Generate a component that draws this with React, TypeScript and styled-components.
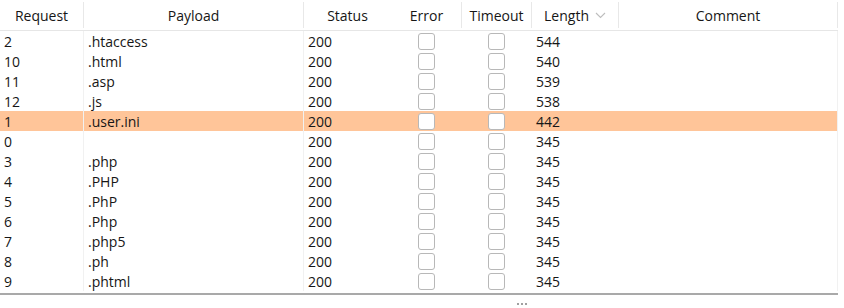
import React from "react";
import styled, { createGlobalStyle } from "styled-components";

const GlobalStyle = createGlobalStyle`
	html, body {
		margin: 0;
		padding: 0;
		background: #ffffff;
	}
	body {
		font-family: "Open Sans", "Noto Sans", "Liberation Sans", sans-serif;
		font-size: 14px;
		color: #161616;
	}
`;

interface Column {
	key: string;
	title: string;
	width: number;
	sorted?: boolean;
	divider?: boolean;
	noHeaderLine?: boolean;
}

interface Result {
	request: number;
	payload: string;
	status: number;
	length: number;
	selected?: boolean;
}

const columns: Column[] = [
	{ key: "request", title: "Request", width: 84, divider: true },
	{ key: "payload", title: "Payload", width: 220, divider: true },
	{ key: "status", title: "Status", width: 88, noHeaderLine: true },
	{ key: "error", title: "Error", width: 70 },
	{ key: "timeout", title: "Timeout", width: 70 },
	{ key: "length", title: "Length", width: 87, sorted: true },
	{ key: "comment", title: "Comment", width: 219, divider: true },
];

const results: Result[] = [
	{ request: 2, payload: ".htaccess", status: 200, length: 544 },
	{ request: 10, payload: ".html", status: 200, length: 540 },
	{ request: 11, payload: ".asp", status: 200, length: 539 },
	{ request: 12, payload: ".js", status: 200, length: 538 },
	{ request: 1, payload: ".user.ini", status: 200, length: 442, selected: true },
	{ request: 0, payload: "", status: 200, length: 345 },
	{ request: 3, payload: ".php", status: 200, length: 345 },
	{ request: 4, payload: ".PHP", status: 200, length: 345 },
	{ request: 5, payload: ".PhP", status: 200, length: 345 },
	{ request: 6, payload: ".Php", status: 200, length: 345 },
	{ request: 7, payload: ".php5", status: 200, length: 345 },
	{ request: 8, payload: ".ph", status: 200, length: 345 },
	{ request: 9, payload: ".phtml", status: 200, length: 345 },
];

const Page = styled.div`
	width: 844px;
	height: 308px;
	display: flex;
	flex-direction: column;
	overflow: hidden;
`;

const Table = styled.div`
	width: 838px;
	display: flex;
	flex-direction: column;
`;

const HeaderRow = styled.div`
	display: flex;
	height: 31px;
	border-bottom: 1px solid #e6e6e6;
	box-sizing: border-box;
	align-items: center;
`;

const HeaderCell = styled.div<{ $w: number; $noLine?: boolean }>`
	width: ${(p) => p.$w}px;
	height: 26px;
	box-sizing: border-box;
	display: flex;
	align-items: center;
	justify-content: center;
	gap: 6px;
	border-right: 1px solid ${(p) => (p.$noLine ? "transparent" : "#e8e8e8")};
	white-space: nowrap;
`;

const Body = styled.div`
	display: flex;
	flex-direction: column;
`;

const Row = styled.div<{ $selected?: boolean }>`
	display: flex;
	height: 20px;
	background: ${(p) => (p.$selected ? "#ffc599" : "transparent")};
`;

const Cell = styled.div<{ $w: number; $center?: boolean; $divider?: boolean }>`
	width: ${(p) => p.$w}px;
	box-sizing: border-box;
	display: flex;
	align-items: center;
	justify-content: ${(p) => (p.$center ? "center" : "flex-start")};
	padding-left: ${(p) => (p.$center ? 0 : 4)}px;
	padding-top: 1px;
	border-right: 1px solid ${(p) => (p.$divider ? "#f1f1f1" : "transparent")};
	white-space: nowrap;
`;

const Check = styled.span`
	width: 17px;
	height: 17px;
	box-sizing: border-box;
	border: 1.5px solid #b8b8b8;
	border-radius: 3px;
	background: #ffffff;
`;

const Footer = styled.div`
	margin-top: 2px;
	width: 838px;
	height: 2px;
	background: #a9a9a9;
`;

const Grip = styled.div`
	display: flex;
	justify-content: center;
	gap: 2px;
	width: 844px;
	margin-top: 8px;
	padding-left: 200px;
	box-sizing: border-box;
	& > span {
		width: 2px;
		height: 2px;
		background: #a0a0a0;
	}
`;

const Chevron = () => (
	<svg width="11" height="7" viewBox="0 0 11 7">
		<path d="M1 1 L5.5 5.5 L10 1" fill="none" stroke="#bdbdbd" strokeWidth="1.1" />
	</svg>
);

const renderCell = (col: Column, r: Result) => {
	switch (col.key) {
		case "error":
		case "timeout":
			return (
				<Cell key={col.key} $w={col.width} $center>
					<Check />
				</Cell>
			);
		case "comment":
			return <Cell key={col.key} $w={col.width} $divider />;
		default:
			return (
				<Cell key={col.key} $w={col.width} $divider={col.divider}>
					{String(r[col.key as keyof Result] ?? "")}
				</Cell>
			);
	}
};

export default function App() {
	return (
		<Page>
			<GlobalStyle />
			<Table>
				<HeaderRow>
					{columns.map((c) => (
						<HeaderCell key={c.key} $w={c.width} $noLine={c.noHeaderLine}>
							{c.title}
							{c.sorted && <Chevron />}
						</HeaderCell>
					))}
				</HeaderRow>
				<Body>
					{results.map((r) => (
						<Row key={r.request} $selected={r.selected}>
							{columns.map((c) => renderCell(c, r))}
						</Row>
					))}
				</Body>
			</Table>
			<Footer />
			<Grip>
				<span />
				<span />
				<span />
			</Grip>
		</Page>
	);
}
